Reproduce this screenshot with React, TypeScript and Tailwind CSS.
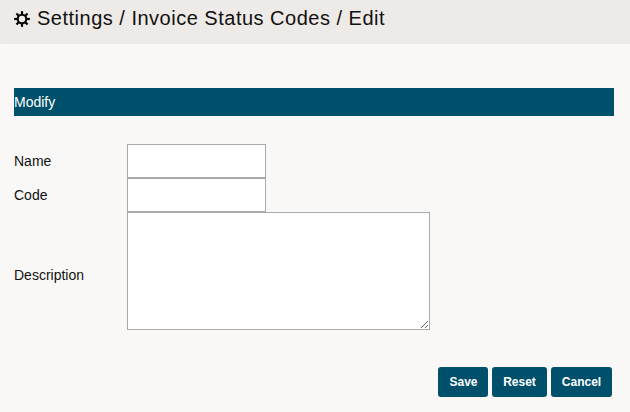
import React from 'react';

const teeth = [0, 45, 90, 135, 180, 225, 270, 315];

const GearIcon = () => (
  <svg viewBox="0 0 16 16" className="mr-[7px] mt-[3px] h-4 w-4 shrink-0">
    <circle cx="8" cy="8" r="4.3" fill="none" stroke="#000" strokeWidth="2.1" />
    {teeth.map((deg) => (
      <rect key={deg} x="6.9" y="0.2" width="2.2" height="3.2" fill="#000" transform={`rotate(${deg} 8 8)`} />
    ))}
  </svg>
);

const App = () => {
  return (
    <div className="h-[412px] w-[630px] overflow-hidden bg-[#faf8f7] font-['Liberation_Sans',Arial,sans-serif] text-[14px] text-[#111]">
      <div className="flex h-11 items-center rounded-bl-[2px] bg-[#eeeae7] pb-[9px] pl-[14px]">
        <GearIcon />
        <h1 className="text-[20px] font-normal tracking-[0.5px] text-[#111]">Settings / Invoice Status Codes / Edit</h1>
      </div>

      <div className="px-[14px] pr-4 pt-11">
        <div className="flex h-7 items-center bg-[#00506b] text-[14px] text-white">Modify</div>

        <form className="mt-7">
          <div className="flex h-[34px] items-center">
            <label className="w-[113px]">Name</label>
            <input className="h-[34px] w-[139px] border border-[#a9a9a9] bg-white" />
          </div>
          <div className="flex h-[34px] items-center">
            <label className="w-[113px]">Code</label>
            <input className="h-[34px] w-[139px] border border-[#a9a9a9] bg-white" />
          </div>
          <div className="flex h-[118px] items-center">
            <label className="w-[113px] pt-2">Description</label>
            <textarea className="h-[118px] w-[303px] border border-[#a9a9a9] bg-white" />
          </div>

          <div className="mt-[37px] flex justify-end gap-1 pr-[2px]">
            <button type="button" className="h-[30px] w-[50px] rounded-[3px] bg-[#00506b] pl-px text-[12px] font-bold text-white">Save</button>
            <button type="button" className="h-[30px] w-[55px] rounded-[3px] bg-[#00506b] text-[12px] font-bold text-white">Reset</button>
            <button type="button" className="h-[30px] w-[61px] rounded-[3px] bg-[#00506b] text-[12px] font-bold text-white">Cancel</button>
          </div>
        </form>
      </div>
    </div>
  );
};

export default App;
